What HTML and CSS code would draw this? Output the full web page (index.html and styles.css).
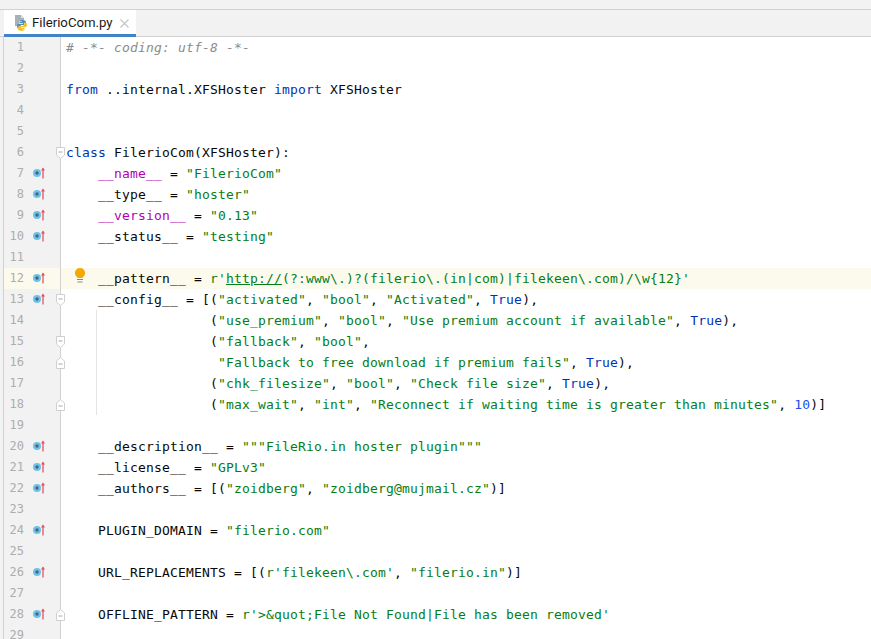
FILE: index.html
```html
<!DOCTYPE html>
<html lang="en">
<head>
<meta charset="utf-8">
<title>FilerioCom.py</title>
<link rel="stylesheet" href="styles.css">
</head>
<body>
<svg class="defs" width="0" height="0" aria-hidden="true">
  <symbol id="mark" viewBox="0 0 14 12">
    <circle cx="4" cy="6" r="4" fill="#6cc3e8"/>
    <circle cx="4" cy="6" r="1.700" fill="#46657e"/>
    <path d="M10 11.5V1.5" stroke="#e8505f" stroke-width="1.300" fill="none"/>
    <path d="M8 3.600 10 .5l2 3.100z" fill="#e8505f"/>
  </symbol>
  <symbol id="fold-open" viewBox="0 0 9 12">
    <path d="M.5.5h8v7.500l-4 3.500-4-3.500z" fill="#fff" stroke="#cfcfcf"/>
    <path d="M2.500 5h4" stroke="#a8a8a8"/>
  </symbol>
  <symbol id="fold-end" viewBox="0 0 9 12">
    <path d="M.5 11.500v-7.500l4-3.500 4 3.500v7.500z" fill="#fff" stroke="#cfcfcf"/>
    <path d="M2.500 7h4" stroke="#a8a8a8"/>
  </symbol>
</svg>
<div class="app">
  <div class="topbar"></div>
  <div class="tabs">
    <div class="tab">
      <svg class="file-icon" width="14" height="16" viewBox="0 0 14 16">
        <path d="M0 0h6l3 3v3H4v5H0z" fill="#a9b1b8"/>
        <path d="M6 0v3h3z" fill="#dcdfe2"/>
        <path d="M7 5C5.400 5 4.500 5.700 4.500 7v1H8v.8H3.800C2.600 8.800 2 9.700 2 11.200s.7 2.300 1.800 2.300H5v-1.700c0-1 .8-1.800 1.800-1.800h2.600c.9 0 1.600-.7 1.600-1.600V7c0-1.300-1.400-2-4-2z" fill="#4d8fc4"/>
        <circle cx="6" cy="6.500" r=".6" fill="#fff"/>
        <path d="M7 16c1.600 0 2.500-.7 2.500-2v-1H6v-.8h4.200c1.200 0 1.800-.9 1.800-2.400S11.300 7.500 10.200 7.500H9v1.700c0 1-.8 1.800-1.800 1.800H4.600c-.9 0-1.600.7-1.600 1.600V14c0 1.300 1.400 2 4 2z" fill="#f5c02e"/>
        <circle cx="8" cy="14.500" r=".6" fill="#fff"/>
      </svg>
      <span class="tab-name">FilerioCom.py</span>
      <svg class="tab-close" width="9" height="9" viewBox="0 0 9 9"><path d="M.5.5l8 8M8.500.5l-8 8" stroke="#c4c4c4" stroke-width="1.100"/></svg>
    </div>
  </div>
  <div class="editor">
    <div class="row"><div class="gutter"><span class="num">1</span></div><div class="code"><span class="cm"># -*- coding: utf-8 -*-</span></div></div>
    <div class="row"><div class="gutter"><span class="num">2</span></div><div class="code"></div></div>
    <div class="row"><div class="gutter"><span class="num">3</span></div><div class="code"><span class="kw">from</span> ..internal.XFSHoster <span class="kw">import</span> XFSHoster</div></div>
    <div class="row"><div class="gutter"><span class="num">4</span></div><div class="code"></div></div>
    <div class="row"><div class="gutter"><span class="num">5</span></div><div class="code"></div></div>
    <div class="row"><div class="gutter"><span class="num">6</span></div><svg class="fold"><use href="#fold-open"/></svg><div class="code"><span class="kw">class</span> FilerioCom(XFSHoster):</div></div>
    <div class="row"><div class="gutter"><span class="num">7</span><svg class="mark"><use href="#mark"/></svg></div><div class="code">    <span class="magic">__name__</span> = <span class="str">"FilerioCom"</span></div></div>
    <div class="row"><div class="gutter"><span class="num">8</span><svg class="mark"><use href="#mark"/></svg></div><div class="code">    __type__ = <span class="str">"hoster"</span></div></div>
    <div class="row"><div class="gutter"><span class="num">9</span><svg class="mark"><use href="#mark"/></svg></div><div class="code">    <span class="magic">__version__</span> = <span class="str">"0.13"</span></div></div>
    <div class="row"><div class="gutter"><span class="num">10</span><svg class="mark"><use href="#mark"/></svg></div><div class="code">    __status__ = <span class="str">"testing"</span></div></div>
    <div class="row"><div class="gutter"><span class="num">11</span></div><div class="code"></div></div>
    <div class="row current"><div class="gutter"><span class="num">12</span><svg class="mark"><use href="#mark"/></svg></div>
      <svg class="bulb" width="10" height="15" viewBox="0 0 10 15"><path d="M5 0a5 5 0 0 1 3 9c-.5.4-.7.8-.8 1H2.800c-.1-.2-.3-.6-.8-1A5 5 0 0 1 5 0z" fill="#f2a900"/><path d="M2 11.500h6M2.500 14h5" stroke="#8a8a8a"/></svg>
      <div class="code">    __pattern__ = <span class="str">r'<span class="link">http://</span>(?:www\.)?(filerio\.(in|com)|filekeen\.com)/\w{12}'</span></div></div>
    <div class="row"><div class="gutter"><span class="num">13</span><svg class="mark"><use href="#mark"/></svg></div><svg class="fold"><use href="#fold-open"/></svg><div class="code">    __config__ = [(<span class="str">"activated"</span>, <span class="str">"bool"</span>, <span class="str">"Activated"</span>, <span class="kw">True</span>),</div></div>
    <div class="row"><div class="gutter"><span class="num">14</span></div><div class="code guide">                  (<span class="str">"use_premium"</span>, <span class="str">"bool"</span>, <span class="str">"Use premium account if available"</span>, <span class="kw">True</span>),</div></div>
    <div class="row"><div class="gutter"><span class="num">15</span></div><svg class="fold"><use href="#fold-open"/></svg><div class="code guide">                  (<span class="str">"fallback"</span>, <span class="str">"bool"</span>,</div></div>
    <div class="row"><div class="gutter"><span class="num">16</span></div><svg class="fold"><use href="#fold-end"/></svg><div class="code guide">                   <span class="str">"Fallback to free download if premium fails"</span>, <span class="kw">True</span>),</div></div>
    <div class="row"><div class="gutter"><span class="num">17</span></div><div class="code guide">                  (<span class="str">"chk_filesize"</span>, <span class="str">"bool"</span>, <span class="str">"Check file size"</span>, <span class="kw">True</span>),</div></div>
    <div class="row"><div class="gutter"><span class="num">18</span></div><svg class="fold"><use href="#fold-end"/></svg><div class="code guide">                  (<span class="str">"max_wait"</span>, <span class="str">"int"</span>, <span class="str">"Reconnect if waiting time is greater than minutes"</span>, <span class="nr">10</span>)]</div></div>
    <div class="row"><div class="gutter"><span class="num">19</span></div><div class="code"></div></div>
    <div class="row"><div class="gutter"><span class="num">20</span><svg class="mark"><use href="#mark"/></svg></div><div class="code">    __description__ = <span class="str">"""FileRio.in hoster plugin"""</span></div></div>
    <div class="row"><div class="gutter"><span class="num">21</span><svg class="mark"><use href="#mark"/></svg></div><div class="code">    __license__ = <span class="str">"GPLv3"</span></div></div>
    <div class="row"><div class="gutter"><span class="num">22</span><svg class="mark"><use href="#mark"/></svg></div><div class="code">    __authors__ = [(<span class="str">"zoidberg"</span>, <span class="str">"zoidberg@mujmail.cz"</span>)]</div></div>
    <div class="row"><div class="gutter"><span class="num">23</span></div><div class="code"></div></div>
    <div class="row"><div class="gutter"><span class="num">24</span><svg class="mark"><use href="#mark"/></svg></div><div class="code">    PLUGIN_DOMAIN = <span class="str">"filerio.com"</span></div></div>
    <div class="row"><div class="gutter"><span class="num">25</span></div><div class="code"></div></div>
    <div class="row"><div class="gutter"><span class="num">26</span><svg class="mark"><use href="#mark"/></svg></div><div class="code">    URL_REPLACEMENTS = [(<span class="str">r'filekeen\.com'</span>, <span class="str">"filerio.in"</span>)]</div></div>
    <div class="row"><div class="gutter"><span class="num">27</span></div><div class="code"></div></div>
    <div class="row"><div class="gutter"><span class="num">28</span><svg class="mark"><use href="#mark"/></svg></div><svg class="fold"><use href="#fold-end"/></svg><div class="code">    OFFLINE_PATTERN = <span class="str">r'&gt;&amp;quot;File Not Found|File has been removed'</span></div></div>
    <div class="row"><div class="gutter"><span class="num">29</span></div><div class="code"></div></div>
  </div>
</div>
</body>
</html>
```
FILE: styles.css
```css
* { box-sizing: border-box; }
html, body { margin: 0; height: 100%; }
body { background: #fff; overflow: hidden; }
.defs { position: absolute; }

.app { display: flex; flex-direction: column; height: 100vh; overflow: hidden; background: #f2f2f2; }
.topbar { height: 10px; flex: none; background: #f2f2f2; border-bottom: 1px solid #d1d1d1; }

.tabs { height: 27px; flex: none; display: flex; padding-left: 4px; background: #f2f2f2; border-bottom: 1px solid #d1d1d1; }
.tab { width: 132px; height: 27px; display: flex; align-items: center; padding: 2px 0 0 11px; background: #fff; border-bottom: 3px solid #4083c9; }
.file-icon { flex: none; margin-right: 3px; }
.tab-name { font: 13.2px/1 "Roboto", "Noto Sans", sans-serif; color: #1a1a1a; }
.tab-close { flex: none; margin-left: 7px; }

.editor { flex: 1; min-height: 0; margin-left: 3px; border-left: 1px solid #d1d1d1; background: #fff; overflow: hidden; }
.row { position: relative; display: flex; height: 21px; }
.row.current { background: #fcfaed; }
.gutter { flex: none; width: 57px; display: flex; align-items: center; background: #f2f2f2; border-right: 1px solid #d1d1d1; }
.current .gutter { background: #fcfaed; }
.num { flex: none; width: 20px; text-align: right; font: 12px/21px "DejaVu Sans Mono", monospace; color: #adadad; }
.mark { flex: none; width: 14px; height: 12px; margin: -1px 0 0 9px; }
.fold { position: absolute; left: 52px; top: 5px; width: 9px; height: 12px; }
.bulb { position: absolute; left: 71px; top: 0; }

.code { flex: 1; padding-left: 5px; white-space: pre; font: 13px/21px "DejaVu Sans Mono", monospace; letter-spacing: .174px; color: #080808; }
.code.guide { background: linear-gradient(#e4e4e4, #e4e4e4) 35px 0 / 1px 100% no-repeat; }
.cm { color: #8c8c8c; font-style: italic; }
.kw { color: #0033b3; }
.str { color: #067d17; }
.magic { color: #b200b2; }
.nr { color: #1750eb; }
.link { text-decoration: underline; }
```
